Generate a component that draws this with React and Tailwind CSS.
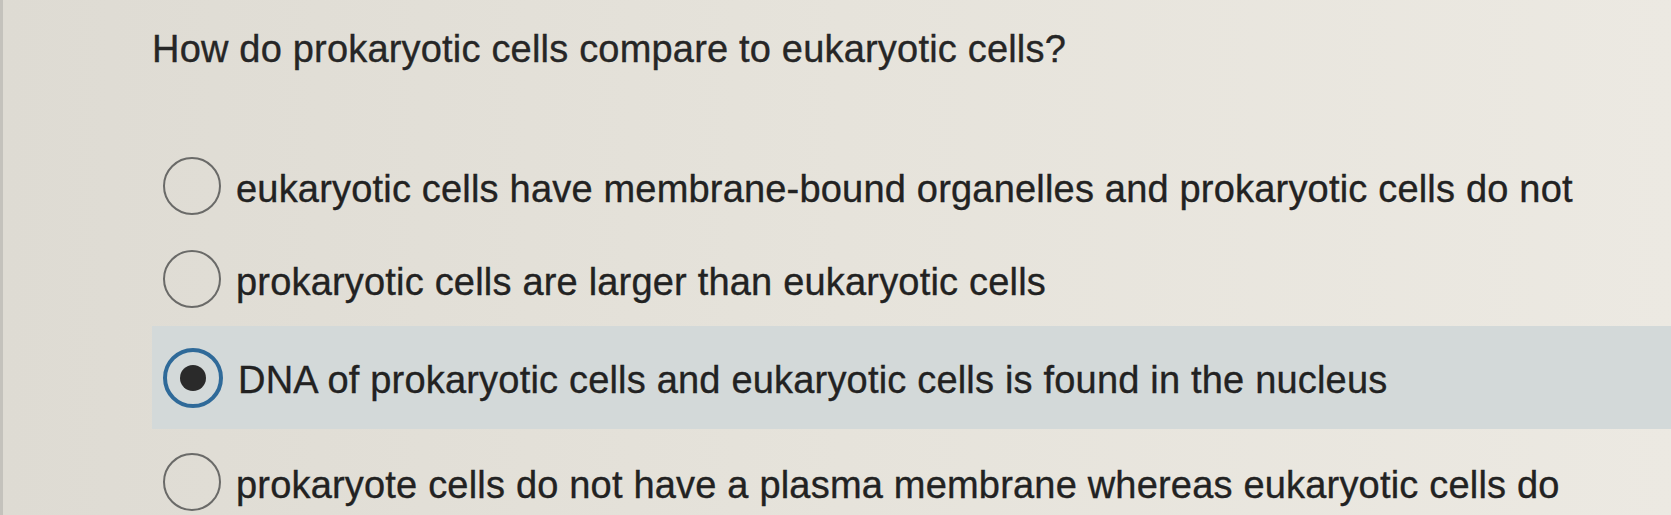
import React from "react";

const options = [
  { id: "a", h: "h-[92px]", label: "eukaryotic cells have membrane-bound organelles and prokaryotic cells do not" },
  { id: "b", h: "h-[94px]", label: "prokaryotic cells are larger than eukaryotic cells" },
  { id: "c", h: "h-[103px]", label: "DNA of prokaryotic cells and eukaryotic cells is found in the nucleus" },
  { id: "d", h: "h-[106px]", label: "prokaryote cells do not have a plasma membrane whereas eukaryotic cells do" },
];

// radio dot, filled when picked
const Radio = ({ checked }) =>
  checked ? (
    <span className="flex items-center justify-center shrink-0 w-[60px] h-[60px] rounded-full border-[4px] border-[#2f6a99]">
      <span className="w-[26px] h-[26px] rounded-full bg-[#2a2a2a]" />
    </span>
  ) : (
    <span className="shrink-0 w-[58px] h-[58px] rounded-full border-2 border-[#6a6a68]" />
  );

const App = () => {
  const selected = "c";

  return (
    <div
      className="w-full h-[515px] overflow-hidden bg-gradient-to-r from-[#dedbd3] via-[#e6e3db] to-[#ece9e2] border-l-[3px] border-[#c4c2bc] pl-[149px] pt-[28px]"
      style={{ fontFamily: '"Liberation Sans", Arial, sans-serif' }}
    >
      <h1 className="text-[38px] leading-[42px] tracking-[0.005em] text-[#262626] font-normal [-webkit-text-stroke:0.35px_#262626]">
        How do prokaryotic cells compare to eukaryotic cells?
      </h1>

      <div className="mt-[70px] flex flex-col">
        {options.map((opt) => {
          const isOn = opt.id === selected;
          return (
            <label
              key={opt.id}
              className={`flex items-center gap-[15px] pl-[11px] ${opt.h} ${isOn ? "bg-[#d3d9d9]" : ""}`}
            >
              <Radio checked={isOn} />
              <span className="pt-[5px] text-[38px] leading-[42px] tracking-[0.005em] text-[#222] whitespace-nowrap [-webkit-text-stroke:0.35px_#222]">
                {opt.label}
              </span>
            </label>
          );
        })}
      </div>
    </div>
  );
};

export default App;
